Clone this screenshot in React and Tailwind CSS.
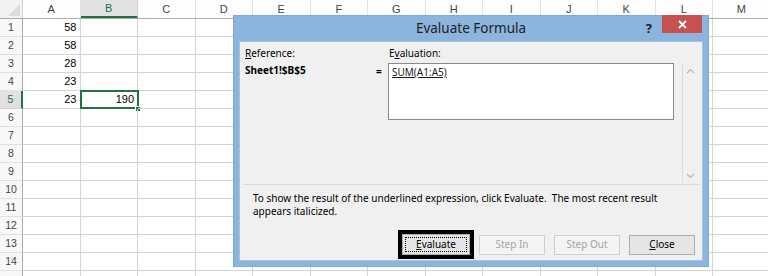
import React from 'react';

const cols = ['A', 'B', 'C', 'D', 'E', 'F', 'G', 'H', 'I', 'J', 'K', 'L', 'M'];
const values = { 1: { A: '58' }, 2: { A: '58' }, 3: { A: '28' }, 4: { A: '23' }, 5: { A: '23', B: '190' } };
const rows = Array.from({ length: 15 }, (_, i) => i + 1);

const Sheet = () => (
  <div className="flex flex-col" style={{ fontFamily: '"Liberation Sans", Arial, sans-serif' }}>
    {/* column header row */}
    <div className="flex h-[19px] border-b border-[#ababab] bg-[#fdfdfd]">
      <div className="relative w-[23px] shrink-0 border-r border-[#d4d4d4] bg-[#f3f3f3]">
        <svg className="absolute bottom-[2px] right-[2px]" width="12" height="12" viewBox="0 0 12 12">
          <polygon points="12,0 12,12 0,12" fill="#dcdcdc" />
        </svg>
      </div>
      {cols.map((c) => (
        <div
          key={c}
          className={
            c === 'B'
              ? 'flex w-[57.5px] shrink-0 items-center justify-center border-r border-[#d4d4d4] border-b-2 border-b-[#217346] bg-[#e1e1e1] text-[11px] text-[#217346]'
              : 'flex w-[57.5px] shrink-0 items-center justify-center border-r border-[#e3e3e3] text-[11px] text-[#444]'
          }
        >
          {c}
        </div>
      ))}
    </div>
    {rows.map((r) => (
      <div key={r} className="flex h-[18px]">
        <div
          className={
            r === 5
              ? 'flex w-[23px] shrink-0 items-center justify-center border-b border-[#d4d4d4] border-r-2 border-r-[#217346] bg-[#e1e1e1] text-[10.5px] text-[#217346]'
              : 'flex w-[23px] shrink-0 items-center justify-center border-b border-[#e0e0e0] border-r border-r-[#ababab] bg-[#f8f8f8] text-[10.5px] text-[#444]'
          }
        >
          {r < 15 ? r : ''}
        </div>
        {cols.map((c) => {
          const v = values[r] && values[r][c];
          const sel = r === 5 && c === 'B';
          return (
            <div
              key={c}
              className="relative flex w-[57.5px] shrink-0 items-center justify-end border-b border-r border-[#d4d4d4] pr-[3px] text-[11px] text-black"
            >
              {v}
              {sel && (
                <>
                  <div className="absolute -left-px -top-px h-[19px] w-[59px] border-2 border-[#217346]" />
                  <div className="absolute -bottom-[4px] -right-[4px] h-[6px] w-[6px] border border-white bg-[#217346]" />
                </>
              )}
            </div>
          );
        })}
      </div>
    ))}
  </div>
);

const Btn = ({ children, disabled, className = '' }) => (
  <div
    className={
      (disabled
        ? 'border-[#cfcfcf] bg-[#f4f4f4] text-[#a3a3a3] '
        : 'border-[#adadad] bg-[#e5e5e5] text-black ') +
      'flex h-[20px] w-[66px] items-center justify-center border ' +
      className
    }
  >
    {children}
  </div>
);

const Dialog = () => (
  <div
    className="absolute left-[233px] top-[15px] flex h-[252px] w-[476px] flex-col border border-[#7fa8d6] bg-[#8bb4de] text-[10px] text-black"
    style={{ fontFamily: '"Noto Sans", "Open Sans", sans-serif' }}
  >
    <div className="relative flex h-[25px] shrink-0 items-center justify-center">
      <span className="text-[13.5px] text-[#1e1e1e]">Evaluate Formula</span>
      <span className="absolute right-[56px] top-[3px] text-[13px] font-bold text-[#222]">?</span>
      <div className="absolute right-[6px] top-[-1px] flex h-[18px] w-[40px] items-center justify-center bg-[#c75050]">
        <svg width="9" height="9" viewBox="0 0 9 9">
          <path d="M1 1 L8 8 M8 1 L1 8" stroke="white" strokeWidth="1.8" />
        </svg>
      </div>
    </div>
    <div className="mx-[5px] flex h-[220px] flex-col border border-[#a9c2de] bg-[#f0f0f0]">
      <div className="flex h-[142px] pt-[4px]">
        <div className="flex w-[136px] flex-col pl-[5px]">
          <span className="leading-[14px]">
            <u>R</u>eference:
          </span>
          <span className="mt-[3px] font-bold leading-[14px]">Sheet1!$B$5</span>
        </div>
        <div className="w-[12px] pt-[18px] font-bold leading-[14px]">=</div>
        <div className="flex w-[286px] flex-col">
          <span className="pl-[1px] leading-[14px]">
            E<u>v</u>aluation:
          </span>
          <div className="mt-[3px] h-[57px] border border-[#8a8a8a] bg-white pl-[3px] pt-[1px] leading-[14px] text-[#1a1a1a]">
            <u>SUM(A1:A5)</u>
          </div>
        </div>
        <div className="ml-[8px] mt-[18px] flex h-[119px] w-[16px] flex-col items-center justify-between border-l border-[#dcdcdc] py-[4px]">
          <svg width="9" height="6" viewBox="0 0 9 6">
            <path d="M1 5 L4.5 1.5 L8 5" fill="none" stroke="#b8b8b8" strokeWidth="1.2" />
          </svg>
          <svg width="9" height="6" viewBox="0 0 9 6">
            <path d="M1 1 L4.5 4.5 L8 1" fill="none" stroke="#b8b8b8" strokeWidth="1.2" />
          </svg>
        </div>
      </div>
      <div className="mx-[3px] border-t border-[#d9d9d9]" />
      <div className="pl-[13px] pt-[7px] leading-[13px]">
        <div>To show the result of the underlined expression, click Evaluate.&nbsp; The most recent result</div>
        <div>appears italicized.</div>
      </div>
      <div className="mt-[12px] flex items-center gap-[5px] pl-[158px]">
        <div className="h-[29px] w-[76px] border-[4px] border-black bg-black">
          <div className="flex h-full w-full items-center justify-center border border-[#adadad] bg-[#e5e5e5]">
            <span className="border border-dotted border-black px-[10px] leading-[13px]">
              <u>E</u>valuate
            </span>
          </div>
        </div>
        <Btn disabled>Step In</Btn>
        <Btn disabled className="ml-[4px]">Step Out</Btn>
        <Btn className="ml-[4px]">
          <span>
            <u>C</u>lose
          </span>
        </Btn>
      </div>
    </div>
  </div>
);

const App = () => (
  <div className="relative h-[276px] w-[768px] overflow-hidden bg-white">
    <Sheet />
    <Dialog />
  </div>
);

export default App;
